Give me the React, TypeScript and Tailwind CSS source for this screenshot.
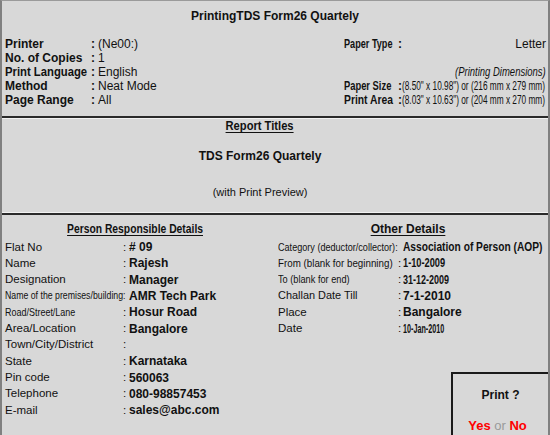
import React from 'react';

const font = "font-['Liberation_Sans',Arial,sans-serif]";

export default function App() {
  const printerRows = [
    { label: 'Printer', value: '(Ne00:)' },
    { label: 'No. of Copies', value: '1' },
    { label: 'Print Language', value: 'English' },
    { label: 'Method', value: 'Neat Mode' },
    { label: 'Page Range', value: 'All' },
  ];

  return (
    <div
      className={`relative w-[550px] h-[435px] overflow-hidden bg-[#d8d8d8] text-[#111] border-t border-t-[#9a9a9a] border-l-2 border-r-2 border-[#808080] flex flex-col ${font}`}
    >
      {/* print settings */}
      <div className="h-[115px] shrink-0 flex flex-col">
        <div className="pt-[8px] h-[22px] leading-[14px] text-[12px] font-bold text-center">
          PrintingTDS Form26 Quartely
        </div>
        <div className="mt-[14px] flex">
          <div className="w-[342px] shrink-0 pl-[3px] flex flex-col">
            {printerRows.map((r) => (
              <div key={r.label} className="h-[14px] flex items-center text-[12px] leading-[14px]">
                <span className="w-[86px] font-bold whitespace-nowrap">
                  {r.label === 'Print Language' ? (
                    <span className="inline-block scale-x-[0.94] origin-left">{r.label}</span>
                  ) : (
                    r.label
                  )}
                </span>
                <span className="w-[7px] font-bold">:</span>
                <span>{r.value}</span>
              </div>
            ))}
          </div>
          <div className="w-[202px] min-w-0 flex flex-col text-[12px] leading-[14px]">
            <div className="h-[14px] flex items-center">
              <span className="w-[54px] font-bold whitespace-nowrap">
                <span className="inline-block scale-x-[0.76] origin-left">Paper Type</span>
              </span>
              <span className="w-[5px] font-bold">:</span>
              <span className="ml-auto">Letter</span>
            </div>
            <div className="h-[14px]" />
            <div className="h-[14px] flex items-center justify-end">
              <span className="inline-block italic whitespace-nowrap scale-x-[0.79] origin-right">
                (Printing Dimensions)
              </span>
            </div>
            <div className="h-[14px] flex items-center">
              <span className="w-[54px] font-bold whitespace-nowrap">
                <span className="inline-block scale-x-[0.78] origin-left">Paper Size</span>
              </span>
              <span className="w-[5px] font-bold">:</span>
              <span className="inline-block whitespace-nowrap scale-x-[0.69] origin-left">
                (8.50" x 10.98") or (216 mm x 279 mm)
              </span>
            </div>
            <div className="h-[14px] flex items-center">
              <span className="w-[54px] font-bold whitespace-nowrap">
                <span className="inline-block scale-x-[0.86] origin-left">Print Area</span>
              </span>
              <span className="w-[5px] font-bold">:</span>
              <span className="inline-block whitespace-nowrap scale-x-[0.69] origin-left">
                (8.03" x 10.63") or (204 mm x 270 mm)
              </span>
            </div>
          </div>
        </div>
      </div>

      <div className="h-[2px] shrink-0 bg-[#2a2a2a]" />
      <div className="h-px shrink-0 bg-[#f2f2f2]" />

      {/* report titles */}
      <div className="h-[93px] shrink-0 flex flex-col items-center pr-[30px] text-[12px] leading-[14px]">
        <div className="font-bold underline underline-offset-2 scale-x-[0.93]">Report Titles</div>
        <div className="mt-[16px] font-bold">TDS Form26 Quartely</div>
        <div className="mt-[22px] text-[11px]">(with Print Preview)</div>
      </div>

      <div className="h-px shrink-0 bg-[#f2f2f2]" />
      <div className="h-[2px] shrink-0 bg-[#2a2a2a]" />

      {/* details */}
      <div className="flex-1 flex pt-[7px]">
        <div className="w-[266px] shrink-0 flex flex-col">
          <div className="h-[14px] leading-[14px] text-[12px] font-bold text-center">
            <span className="inline-block underline underline-offset-2 scale-x-[0.86]">
              Person Responsible Details
            </span>
          </div>
          <div className="mt-[3px] pl-[3px] flex flex-col text-[11.5px]">
            <div className="h-[16.3px] flex items-center">
              <span className="w-[118px]">Flat No</span>
              <span className="w-[6px]">:</span>
              <span className="font-bold text-[12px]"># 09</span>
            </div>
            <div className="h-[16.3px] flex items-center">
              <span className="w-[118px]">Name</span>
              <span className="w-[6px]">:</span>
              <span className="font-bold text-[12px]">Rajesh</span>
            </div>
            <div className="h-[16.3px] flex items-center">
              <span className="w-[118px]">Designation</span>
              <span className="w-[6px]">:</span>
              <span className="font-bold text-[12px]">Manager</span>
            </div>
            <div className="h-[16.3px] flex items-center">
              <span className="w-[124px] whitespace-nowrap">
                <span className="inline-block scale-x-[0.76] origin-left">Name of the premises/building:</span>
              </span>
              <span className="font-bold text-[12px]">AMR Tech Park</span>
            </div>
            <div className="h-[16.3px] flex items-center">
              <span className="w-[118px] whitespace-nowrap">
                <span className="inline-block scale-x-[0.78] origin-left">Road/Street/Lane</span>
              </span>
              <span className="w-[6px]">:</span>
              <span className="font-bold text-[12px]">Hosur Road</span>
            </div>
            <div className="h-[16.3px] flex items-center">
              <span className="w-[118px]">Area/Location</span>
              <span className="w-[6px]">:</span>
              <span className="font-bold text-[12px]">Bangalore</span>
            </div>
            <div className="h-[16.3px] flex items-center">
              <span className="w-[118px]">Town/City/District</span>
              <span className="w-[6px]">:</span>
            </div>
            <div className="h-[16.3px] flex items-center">
              <span className="w-[118px]">State</span>
              <span className="w-[6px]">:</span>
              <span className="font-bold text-[12px]">Karnataka</span>
            </div>
            <div className="h-[16.3px] flex items-center">
              <span className="w-[118px]">Pin code</span>
              <span className="w-[6px]">:</span>
              <span className="font-bold text-[12px]">560063</span>
            </div>
            <div className="h-[16.3px] flex items-center">
              <span className="w-[118px]">Telephone</span>
              <span className="w-[6px]">:</span>
              <span className="font-bold text-[12px]">080-98857453</span>
            </div>
            <div className="h-[16.3px] flex items-center">
              <span className="w-[118px]">E-mail</span>
              <span className="w-[6px]">:</span>
              <span className="font-bold text-[12px]">sales@abc.com</span>
            </div>
          </div>
        </div>

        <div className="flex-1 min-w-0 flex flex-col">
          <div className="h-[14px] leading-[14px] text-[12px] font-bold text-center">
            <span className="underline underline-offset-2">Other Details</span>
          </div>
          <div className="mt-[3px] pl-[10px] flex flex-col text-[11.5px]">
            <div className="h-[16.3px] flex items-center">
              <span className="w-[125px] shrink-0 whitespace-nowrap">
                <span className="inline-block scale-x-[0.79] origin-left">Category (deductor/collector):</span>
              </span>
              <span className="inline-block font-bold text-[12px] whitespace-nowrap scale-x-[0.85] origin-left">
                Association of Person (AOP)
              </span>
            </div>
            <div className="h-[16.3px] flex items-center">
              <span className="w-[120px] whitespace-nowrap">
                <span className="inline-block scale-x-[0.85] origin-left">From (blank for beginning)</span>
              </span>
              <span className="w-[5px]">:</span>
              <span className="inline-block font-bold text-[12px] scale-x-[0.77] origin-left">1-10-2009</span>
            </div>
            <div className="h-[16.3px] flex items-center">
              <span className="w-[120px] whitespace-nowrap">
                <span className="inline-block scale-x-[0.8] origin-left">To (blank for end)</span>
              </span>
              <span className="w-[5px]">:</span>
              <span className="inline-block font-bold text-[12px] scale-x-[0.75] origin-left">31-12-2009</span>
            </div>
            <div className="h-[16.3px] flex items-center">
              <span className="w-[120px] whitespace-nowrap">
                <span className="inline-block scale-x-[0.95] origin-left">Challan Date Till</span>
              </span>
              <span className="w-[5px]">:</span>
              <span className="font-bold text-[12px]">7-1-2010</span>
            </div>
            <div className="h-[16.3px] flex items-center">
              <span className="w-[120px]">Place</span>
              <span className="w-[5px]">:</span>
              <span className="font-bold text-[12px]">Bangalore</span>
            </div>
            <div className="h-[16.3px] flex items-center">
              <span className="w-[120px]">Date</span>
              <span className="w-[5px]">:</span>
              <span className="inline-block font-bold text-[12px] scale-x-[0.6] origin-left">10-Jan-2010</span>
            </div>
          </div>
        </div>
      </div>

      {/* print prompt */}
      <div className="absolute -right-[2px] -bottom-[2px] w-[99px] h-[65px] border-t-2 border-l-2 border-r-2 border-[#1a1a1a] bg-[#d8d8d8] flex flex-col items-center">
        <div className="mt-[14px] text-[12px] leading-[14px] font-bold">Print ?</div>
        <div className="mt-[17px] mr-[6px] text-[13px] leading-[14px]">
          <span className="font-bold text-[#ff0000]">Yes</span>
          <span className="text-[#9a9a9a]"> or </span>
          <span className="font-bold text-[#ff0000]">No</span>
        </div>
      </div>
    </div>
  );
}
